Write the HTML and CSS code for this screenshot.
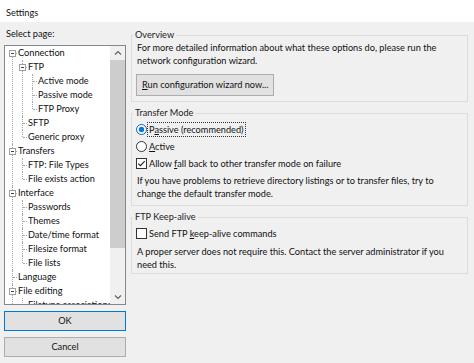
FILE: index.html
```html
<!DOCTYPE html>
<html lang="en">
<head>
<meta charset="UTF-8" />
<meta name="viewport" content="width=device-width, initial-scale=1" />
<title>Settings</title>
<link rel="stylesheet" href="styles.css">
</head>
<body>
<div class="window">
  <div class="titlebar">Settings</div>
  <div class="content">
    <div class="side">
      <div class="side-label">Select page:</div>
      <div class="treebox">
        <ul class="tree">
          <li><i class="box"></i>Connection
            <ul>
              <li><i class="box"></i>FTP
                <ul>
                  <li>Active mode</li>
                  <li>Passive mode</li>
                  <li>FTP Proxy</li>
                </ul>
              </li>
              <li>SFTP</li>
              <li>Generic proxy</li>
            </ul>
          </li>
          <li><i class="box"></i>Transfers
            <ul>
              <li>FTP: File Types</li>
              <li>File exists action</li>
            </ul>
          </li>
          <li><i class="box"></i>Interface
            <ul>
              <li>Passwords</li>
              <li>Themes</li>
              <li>Date/time format</li>
              <li>Filesize format</li>
              <li>File lists</li>
            </ul>
          </li>
          <li>Language</li>
          <li class="more"><i class="box"></i>File editing
            <ul>
              <li>Filetype associations</li>
            </ul>
          </li>
        </ul>
        <div class="vscroll">
          <div class="arrow"><svg width="8" height="6" viewBox="0 0 8 6"><polyline points="1,4.5 4,1.5 7,4.5" fill="none" stroke="#606060" stroke-width="1.2"/></svg></div>
          <div class="track"><div class="thumb"></div></div>
          <div class="arrow"><svg width="8" height="6" viewBox="0 0 8 6"><polyline points="1,1.5 4,4.5 7,1.5" fill="none" stroke="#606060" stroke-width="1.2"/></svg></div>
        </div>
      </div>
      <button class="btn btn-default">OK</button>
      <button class="btn">Cancel</button>
    </div>

    <div class="page">
      <fieldset class="group">
        <legend>Overview</legend>
        <p>For more detailed information about what these options do, please run the<br>network configuration wizard.</p>
        <button class="btn btn-wizard"><u>R</u>un configuration wizard now...</button>
      </fieldset>

      <fieldset class="group">
        <legend>Transfer Mode</legend>
        <div class="opts">
          <div class="opt">
            <svg class="mark" width="11" height="11" viewBox="0 0 11 11"><circle cx="5.5" cy="5.5" r="5" fill="#fff" stroke="#1460ad"/><circle cx="5.5" cy="5.5" r="2.7" fill="#0a78d7"/></svg>
            <span class="focus">P<u>a</u>ssive (recommended)</span>
          </div>
          <div class="opt">
            <svg class="mark" width="11" height="11" viewBox="0 0 11 11"><circle cx="5.5" cy="5.5" r="5" fill="#fff" stroke="#333"/></svg>
            <span><u>A</u>ctive</span>
          </div>
          <div class="opt check">
            <svg class="mark" width="11" height="11" viewBox="0 0 11 11"><rect x="0.5" y="0.5" width="10" height="10" fill="#fff" stroke="#333"/><polyline points="2.3,5.6 4.4,7.7 8.7,3.2" fill="none" stroke="#222" stroke-width="1.1"/></svg>
            <span>Allow <u>f</u>all back to other transfer mode on failure</span>
          </div>
        </div>
        <p class="note">If you have problems to retrieve directory listings or to transfer files, try to<br>change the default transfer mode.</p>
      </fieldset>

      <fieldset class="group group-last">
        <legend>FTP Keep-alive</legend>
        <div class="opts">
          <div class="opt check">
            <svg class="mark" width="11" height="11" viewBox="0 0 11 11"><rect x="0.5" y="0.5" width="10" height="10" fill="#fff" stroke="#333"/></svg>
            <span>Send FTP <u>k</u>eep-alive commands</span>
          </div>
        </div>
        <p class="note note-wide">A proper server does not require this. Contact the server administrator if you<br>need this.</p>
      </fieldset>
    </div>
  </div>
</div>
</body>
</html>
```

FILE: styles.css
```css
* { box-sizing: border-box; }
html, body { margin: 0; height: 100%; }
body {
  background: #f0f0f0; color: #111;
  font-family: Lato, "Noto Sans", sans-serif; font-size: 9.2px;
}
.window {
  display: flex; flex-direction: column; height: 363px; overflow: hidden;
}
.titlebar {
  height: 22px; background: #fff; padding: 3px 6px 0; line-height: 19px;
}
.content { flex: 1; display: flex; }

/* left column: page tree + dialog buttons */
.side {
  width: 126px; padding: 5px 0 0 4px; display: flex; flex-direction: column;
}
.side-label { line-height: 14px; margin-bottom: 4px; padding-left: 2px; }
.treebox {
  height: 260px; background: #fff; border: 1px solid #828790; display: flex;
}
.tree {
  flex: 1; margin: 0; padding: 0; list-style: none; overflow: hidden; line-height: 14px;
}
.tree ul { list-style: none; margin: 0 0 0 -3px; padding: 0; }
.tree li { position: relative; padding-left: 13px; white-space: nowrap; }
.tree li::before {
  content: ""; position: absolute; left: 7px; top: 0; bottom: 0;
  border-left: 1px dotted #a8a8a8;
}
.tree li:last-child::before { bottom: auto; height: 7px; }
.tree li.more::before { bottom: 0; height: auto; }
.tree > li:first-child::before { top: 7px; }
.tree li::after {
  content: ""; position: absolute; left: 8px; top: 7px; width: 4px;
  border-top: 1px dotted #a8a8a8;
}
.tree .box {
  position: absolute; left: 4px; top: 4px; width: 7px; height: 7px;
  border: 1px solid #a0a0a0; background: #fff; z-index: 1;
}
.tree .box::after {
  content: ""; position: absolute; left: 1px; top: 2px; width: 3px; height: 1px; background: #444;
}
.vscroll {
  width: 15px; background: #f0f0f0; display: flex; flex-direction: column;
}
.vscroll .arrow {
  height: 14px; display: flex; align-items: center; justify-content: center;
}
.track { flex: 1; }
.thumb { height: 188px; background: #cdcdcd; }

.btn {
  font: inherit; line-height: 18px; color: #111; background: #e1e1e1; border: 1px solid #adadad;
  padding: 0; margin: 6px 0 0; height: 20px; width: 100%;
}
.btn-default { border-color: #0078d7; }

/* right column: settings page */
.page { flex: 1; padding: 7px 6px 0 5px; }
.group {
  margin: 0 0 5px; padding: 0 6px 5px 5px; border: 1px solid #dcdcdc; min-width: 0;
}
.group-last { padding-bottom: 2px; }
.group legend {
  padding: 0 2px; margin-left: -4px; line-height: 12px; color: #222;
}
.group p { margin: 0; line-height: 13px; white-space: nowrap; }
.btn-wizard {
  width: auto; height: 22px; line-height: 20px; margin-top: 7px; padding: 0 5px; margin-left: -1px;
}
.opts { padding-top: 2px; }
.opt { display: flex; align-items: center; height: 17px; }
.opt.check { height: 16px; }
.mark { flex: none; margin: 0 2px 0 -1px; }
.focus { outline: 1px dotted #333; outline-offset: 1px; }
.group p.note { margin-top: 3px; }
.group p.note-wide { margin-top: 4px; }
```
